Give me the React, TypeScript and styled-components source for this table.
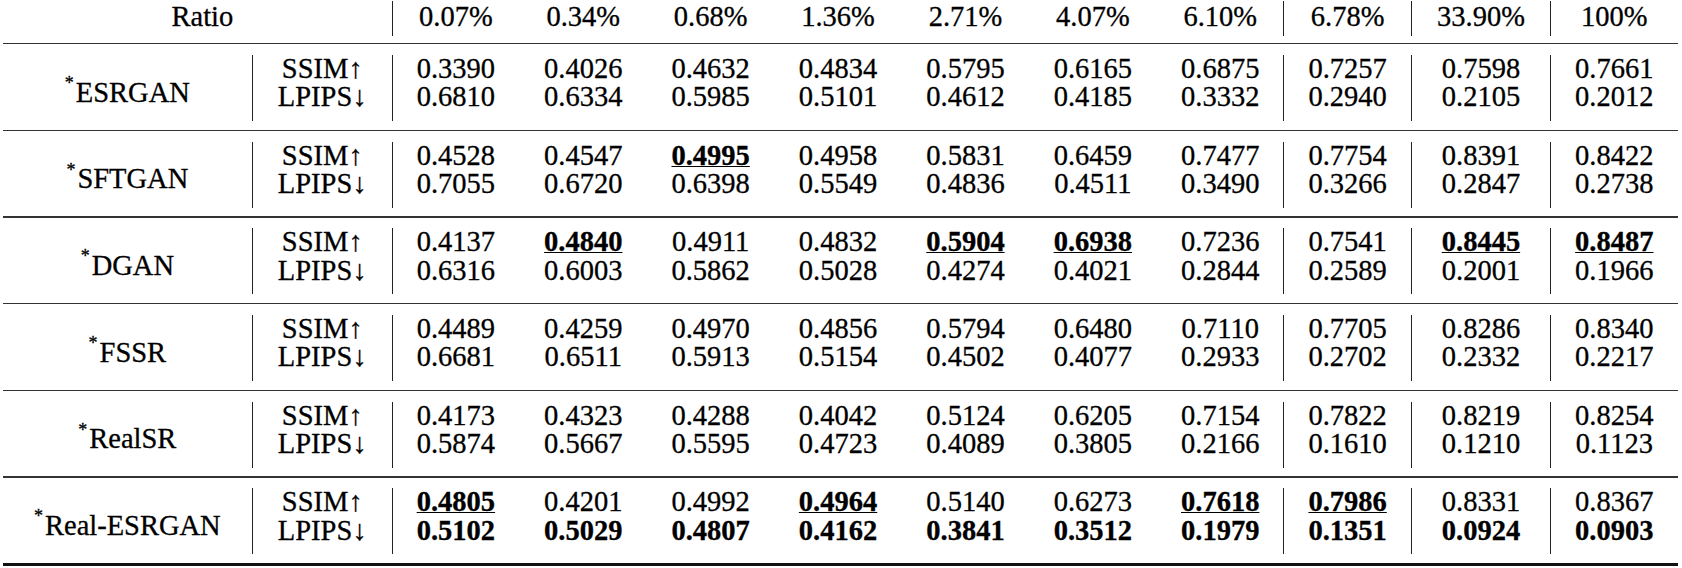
import React from 'react';
import styled, { createGlobalStyle } from 'styled-components';

const GlobalStyle = createGlobalStyle`
  html, body {
    margin: 0;
    padding: 0;
    background: #ffffff;
  }
  body {
    font-family: "Liberation Serif", serif;
    color: #111111;
  }
`;

const ratios = ['0.07%', '0.34%', '0.68%', '1.36%', '2.71%', '4.07%', '6.10%', '6.78%', '33.90%', '100%'];

// "*" prefix = bold + underline, "!" prefix = bold
const methods = [
  {
    name: 'ESRGAN',
    ssim: ['0.3390', '0.4026', '0.4632', '0.4834', '0.5795', '0.6165', '0.6875', '0.7257', '0.7598', '0.7661'],
    lpips: ['0.6810', '0.6334', '0.5985', '0.5101', '0.4612', '0.4185', '0.3332', '0.2940', '0.2105', '0.2012'],
  },
  {
    name: 'SFTGAN',
    ssim: ['0.4528', '0.4547', '*0.4995', '0.4958', '0.5831', '0.6459', '0.7477', '0.7754', '0.8391', '0.8422'],
    lpips: ['0.7055', '0.6720', '0.6398', '0.5549', '0.4836', '0.4511', '0.3490', '0.3266', '0.2847', '0.2738'],
  },
  {
    name: 'DGAN',
    ssim: ['0.4137', '*0.4840', '0.4911', '0.4832', '*0.5904', '*0.6938', '0.7236', '0.7541', '*0.8445', '*0.8487'],
    lpips: ['0.6316', '0.6003', '0.5862', '0.5028', '0.4274', '0.4021', '0.2844', '0.2589', '0.2001', '0.1966'],
  },
  {
    name: 'FSSR',
    ssim: ['0.4489', '0.4259', '0.4970', '0.4856', '0.5794', '0.6480', '0.7110', '0.7705', '0.8286', '0.8340'],
    lpips: ['0.6681', '0.6511', '0.5913', '0.5154', '0.4502', '0.4077', '0.2933', '0.2702', '0.2332', '0.2217'],
  },
  {
    name: 'RealSR',
    ssim: ['0.4173', '0.4323', '0.4288', '0.4042', '0.5124', '0.6205', '0.7154', '0.7822', '0.8219', '0.8254'],
    lpips: ['0.5874', '0.5667', '0.5595', '0.4723', '0.4089', '0.3805', '0.2166', '0.1610', '0.1210', '0.1123'],
  },
  {
    name: 'Real-ESRGAN',
    ssim: ['*0.4805', '0.4201', '0.4992', '*0.4964', '0.5140', '0.6273', '*0.7618', '*0.7986', '0.8331', '0.8367'],
    lpips: ['!0.5102', '!0.5029', '!0.4807', '!0.4162', '!0.3841', '!0.3512', '!0.1979', '!0.1351', '!0.0924', '!0.0903'],
  },
];

// ratio columns with a vertical rule on their left
const ruled = [0, 7, 8, 9];

const COLUMNS = '248.7px 140px repeat(8, 127.4px) 139.3px 127.4px';

function Value({ raw }: { raw: string }) {
  if (raw.startsWith('*')) return <Strong $under>{raw.slice(1)}</Strong>;
  if (raw.startsWith('!')) return <Strong>{raw.slice(1)}</Strong>;
  return <Plain>{raw}</Plain>;
}

function App() {
  return (
    <Page>
      <GlobalStyle />
      <Table>
        <HeaderRow>
          <RatioLabel>Ratio</RatioLabel>
          {ratios.map((r, i) => (
            <HeadCell key={r} $rule={ruled.includes(i)}>{r}</HeadCell>
          ))}
        </HeaderRow>
        <MidRule />
        {methods.map((m, idx) => (
          <React.Fragment key={m.name}>
            <BodyRow>
              <MethodCell>
                <Star>*</Star>
                {m.name}
              </MethodCell>
              <MetricCell>
                <Plain>SSIM↑</Plain>
                <Plain>LPIPS↓</Plain>
              </MetricCell>
              {m.ssim.map((s, i) => (
                <NumCell key={i} $rule={ruled.includes(i)}>
                  <Value raw={s} />
                  <Value raw={m.lpips[i]} />
                </NumCell>
              ))}
            </BodyRow>
            {idx < methods.length - 1 ? <MidRule /> : <BottomRule />}
          </React.Fragment>
        ))}
      </Table>
    </Page>
  );
}

const Page = styled.div`
  width: 1682px;
  height: 568px;
  overflow: hidden;
  background: #fff;
`;

const Table = styled.div`
  width: 1675px;
  margin-left: 3px;
  display: flex;
  flex-direction: column;
  font-family: 'Liberation Serif', serif;
  font-size: 28.5px;
  line-height: 28.5px;
  color: #000;
  -webkit-text-stroke: 0.3px #000;
`;

const HeaderRow = styled.div`
  display: grid;
  grid-template-columns: ${COLUMNS};
  padding: 1px 0 7.5px;
`;

const RatioLabel = styled.div`
  grid-column: span 2;
  text-align: center;
  padding: 2px 0 4px 10px;
`;

const HeadCell = styled.div<{ $rule?: boolean }>`
  text-align: center;
  padding: 2px 0 4px;
  border-left: 1.3px solid ${(p) => (p.$rule ? '#222' : 'transparent')};
`;

const MidRule = styled.div`
  height: 1.4px;
  background: #333;
`;

const BottomRule = styled.div`
  height: 2.6px;
  background: #111;
`;

const BodyRow = styled.div`
  display: grid;
  grid-template-columns: ${COLUMNS};
  padding: 10.5px 0 8.8px;
`;

const MethodCell = styled.div`
  display: flex;
  align-items: center;
  justify-content: center;
  padding-top: 10px;
`;

const Star = styled.span`
  font-size: 18px;
  line-height: 18px;
  margin-top: -20px;
  margin-right: 2px;
`;

const MetricCell = styled.div`
  display: flex;
  flex-direction: column;
  align-items: center;
  padding-bottom: 9px;
  border-left: 1.3px solid #222;
`;

const NumCell = styled.div<{ $rule?: boolean }>`
  display: flex;
  flex-direction: column;
  align-items: center;
  padding-bottom: 9px;
  border-left: 1.3px solid ${(p) => (p.$rule ? '#222' : 'transparent')};
`;

const Plain = styled.span`
  display: block;
`;

const Strong = styled.span<{ $under?: boolean }>`
  display: block;
  font-weight: 700;
  text-decoration: ${(p) => (p.$under ? 'underline' : 'none')};
  text-decoration-thickness: 1.4px;
  text-underline-offset: 1px;
`;

export default App;
